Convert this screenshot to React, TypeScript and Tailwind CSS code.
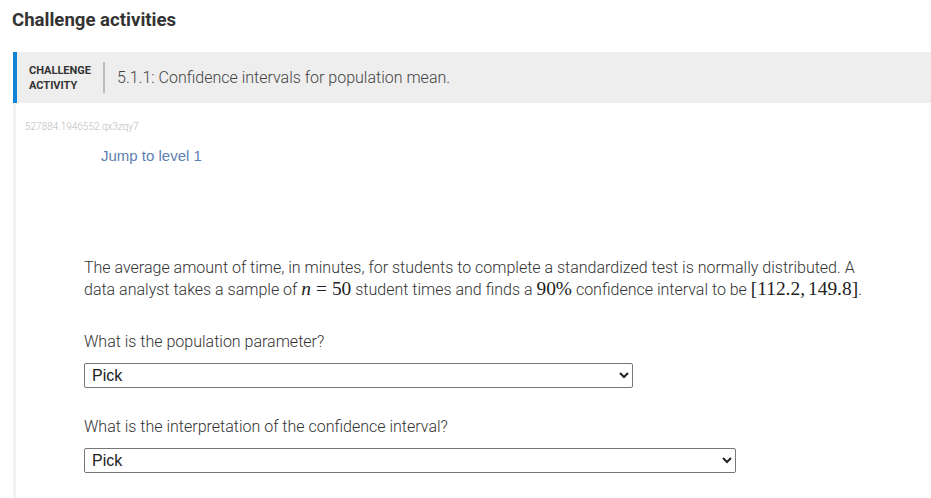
const math = "font-['Liberation_Serif',serif] text-[19.4px] leading-none text-[#222] font-normal";

function Pick({ width }: { width: string }) {
  return (
    <select
      className={`${width} h-[25px] border border-[#767676] rounded-[2px] bg-white pl-[3px] py-0 text-[16px] leading-[20px] text-[#222] font-['Liberation_Sans',sans-serif]`}
      defaultValue="pick"
    >
      <option value="pick">Pick</option>
    </select>
  );
}

export default function App() {
  return (
    <div className="w-[931px] h-[498px] overflow-hidden bg-white font-['Roboto',sans-serif] text-[#333]">
      <h2 className="pl-[12px] pt-[8px] text-[18.6px] font-bold leading-[24px] text-[#333]">
        Challenge activities
      </h2>

      <div className="ml-[13px] mt-[20px]">
        <div className="flex h-[51px] items-center bg-[#eeeeee] border-l-4 border-[#1284d6]">
          <div className="pl-[12px] pr-[12px] text-[11px] font-bold leading-[15px] text-[#333]">
            CHALLENGE
            <br />
            ACTIVITY
          </div>
          <div className="h-[31px] w-[2px] bg-[#bdbdbd]" />
          <div className="pl-[12px] text-[16px] font-light text-[#444]">
            5.1.1: Confidence intervals for population mean.
          </div>
        </div>

        <div className="border-l-[3px] border-[#f2f2f2] pb-[40px]">
          <div className="pl-[9px] pt-[18px] text-[10px] font-light leading-[12px] text-[#bbbbbb]">
            527884.1946552.qx3zqy7
          </div>
          <div className="pl-[85px] pt-[13px] text-[15px] leading-[20px] text-[#5d7fb0] font-['Liberation_Sans',sans-serif]">
            Jump to level 1
          </div>

          <div className="pl-[68px] pt-[91px] w-[860px] text-[16px] font-light leading-[22px] text-[#333]">
            <div>
              <p>
                The average amount of time, in minutes, for students to complete a standardized test is normally distributed. A
              </p>
              <p>
                <span>data analyst takes a sample of</span>{" "}
                <span className={math}>
                  <i>n</i>
                  <span className="mx-[5px]">=</span>50
                </span>{" "}
                <span>student times and finds a</span> <span className={math}>90%</span>{" "}
                <span>confidence interval to be</span>{" "}
                <span className={math}>
                  [112.2,<span className="ml-[3px]">149.8</span>]
                </span>
                .
              </p>
            </div>

            <p className="mt-[31px] leading-[20px]">What is the population parameter?</p>
            <div className="mt-[11px] flex">
              <Pick width="w-[549px]" />
            </div>

            <p className="mt-[29px] leading-[20px]">What is the interpretation of the confidence interval?</p>
            <div className="mt-[11px] flex">
              <Pick width="w-[652px]" />
            </div>
          </div>
        </div>
      </div>
    </div>
  );
}
